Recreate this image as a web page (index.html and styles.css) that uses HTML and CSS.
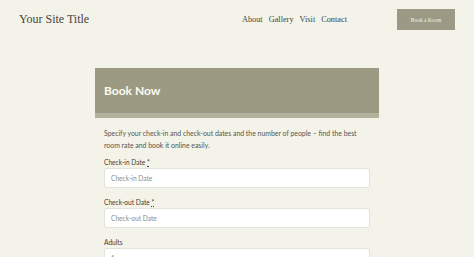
FILE: index.html
```html
<!DOCTYPE html>
<html>
<head>
<meta charset="utf-8">
<link rel="stylesheet" href="styles.css">
</head>
<body>
<header class="site-header">
  <div class="site-title">Your Site Title</div>
  <nav class="nav">
    <a class="nav-link">About</a><a class="nav-link">Gallery</a><a class="nav-link">Visit</a><a class="nav-link">Contact</a>
  </nav>
  <a class="cta">Book a Room</a>
</header>
<main class="main">
  <div class="card">
    <div class="card-head"><h1>Book Now</h1></div>
    <div class="card-strip"></div>
    <div class="card-body">
      <p class="intro">Specify your check-in and check-out dates and the number of people – find the best room rate and book it online easily.</p>
      <label class="label">Check-in Date <span class="req">*</span></label>
      <div class="input">Check-in Date</div>
      <label class="label">Check-out Date <span class="req">*</span></label>
      <div class="input">Check-out Date</div>
      <label class="label">Adults</label>
      <div class="input">1</div>
    </div>
  </div>
</main>
</body>
</html>
```
FILE: styles.css
```css
* { box-sizing: border-box; }
html, body { margin: 0; padding: 0; }
body {
  background: #f4f3e9;
  width: 474px;
  height: 257px;
  overflow: hidden;
  font-family: "Lato", "Open Sans", sans-serif;
}
.site-header {
  display: flex;
  align-items: center;
  height: 39px;
  padding: 0 19px 0 19px;
}
.site-title {
  font-family: "Liberation Serif", "DejaVu Serif", serif;
  font-size: 12px;
  color: #45453f;
  flex: 1;
}
.nav {
  display: flex;
  gap: 6px;
  font-family: "Liberation Serif", serif;
  font-size: 8.3px;
  margin-right: 50px;
}
.nav-link { color: #45453f; }
.cta {
  display: flex;
  align-items: center;
  justify-content: center;
  width: 58px;
  height: 21px;
  background: #9c9a85;
  color: #f2f1e6;
  font-family: "Liberation Serif", serif;
  font-size: 5.5px;
}
.main {
  display: flex;
  justify-content: center;
  padding-top: 29px;
}
.card { width: 284px; }
.card-head {
  background: #9c9a83;
  height: 45px;
  display: flex;
  align-items: center;
  padding-left: 9px;
}
.card-head h1 {
  margin: 0;
  font-family: "Lato", sans-serif;
  font-weight: 700;
  font-size: 12px;
  color: #fbfaf3;
}
.card-strip { height: 5px; background: #b2b19c; }
.card-body { padding: 9px 9px 0 9px; }
.intro {
  margin: 0 0 7px 0;
  font-size: 6.9px;
  line-height: 12px;
  color: #55554e;
}
.label {
  display: block;
  font-size: 6.6px;
  color: #3e3e38;
  margin-bottom: 2px;
}
.req { text-decoration: underline dotted; }
.input {
  height: 20px;
  background: #ffffff;
  border: 1px solid #e4e3da;
  border-radius: 2px;
  font-size: 6.6px;
  color: #8d8d88;
  display: flex;
  align-items: center;
  padding-left: 6px;
  margin-bottom: 10px;
}
```
